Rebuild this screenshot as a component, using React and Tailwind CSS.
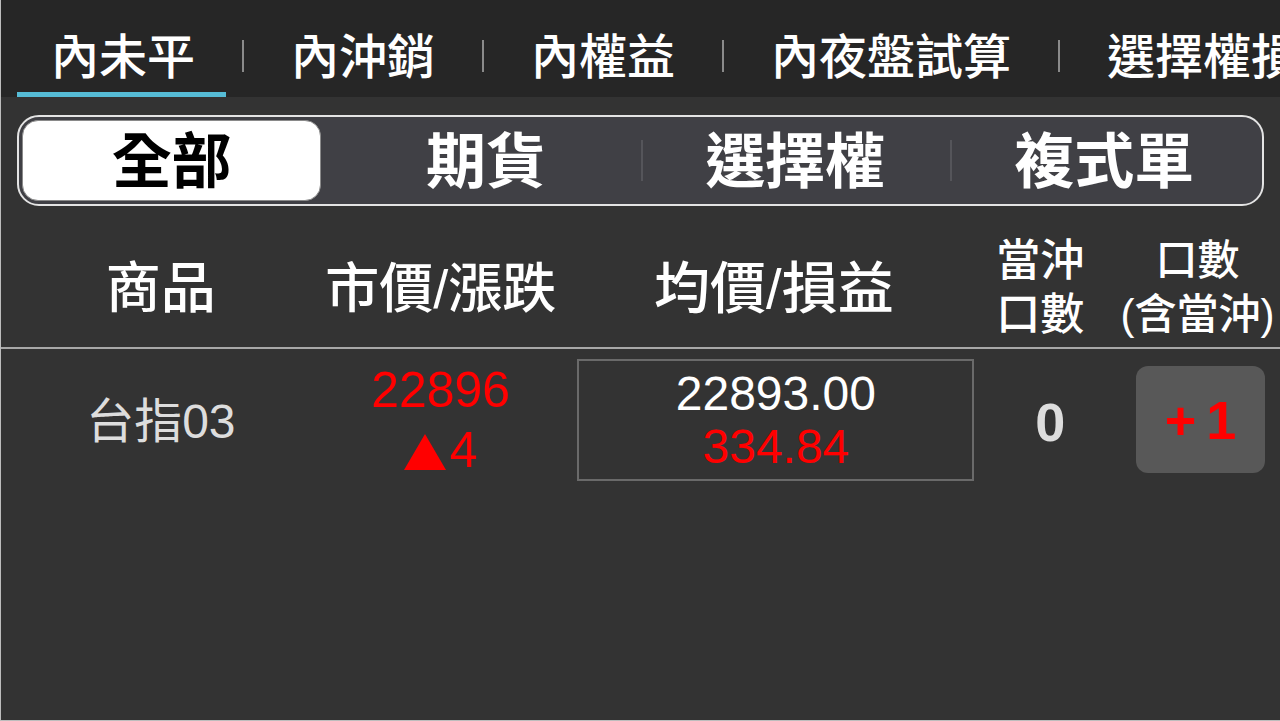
import React from 'react';

const CJK = { fontFamily: '"Liberation Sans", "Noto Sans CJK TC", sans-serif' };

const tabs = ['內未平', '內沖銷', '內權益', '內夜盤試算', '選擇權損益'];
const segments = ['全部', '期貨', '選擇權', '複式單'];

function TopTabs() {
  return (
    <div className="flex h-[97px] items-stretch bg-[#262626] pl-4 overflow-hidden whitespace-nowrap">
      {tabs.map((t, i) => (
        <React.Fragment key={t}>
          {i > 0 && (
            <div className="mx-[13px] flex items-center pt-[14px]">
              <div className="h-[32px] w-[2px] bg-[#8a8a8a]" />
            </div>
          )}
          <div className="relative flex shrink-0 items-center px-[34px] pt-[18px] text-[48px] font-medium leading-none text-white">
            {t}
            {i === 0 && <div className="absolute bottom-0 left-0 right-[3px] h-[5px] bg-[#56bcd6]" />}
          </div>
        </React.Fragment>
      ))}
    </div>
  );
}

function Segments() {
  return (
    <div className="mx-4 mt-[18px] h-[91px] rounded-[22px] border-2 border-[#e4e4e4] bg-[#404045] p-[3px]">
      <div className="grid h-full grid-cols-4">
        {segments.map((s, i) => (
          <div key={s} className="relative flex items-center justify-center">
            {i === 0 ? (
              <div className="mr-[10px] flex h-full w-full items-center justify-center rounded-[16px] border border-[#8a8a8a] bg-white pt-[5px] text-[60px] font-bold leading-none text-black">
                {s}
              </div>
            ) : (
              <div className="pt-[5px] text-[60px] font-bold leading-none text-white">{s}</div>
            )}
            {i > 1 && <div className="absolute left-0 top-[20px] bottom-[20px] w-[2px] bg-[#55555a]" />}
          </div>
        ))}
      </div>
    </div>
  );
}

function HeaderRow() {
  return (
    <div className="flex h-[143px] items-center border-b-2 border-[#a8a8a8] text-white font-medium">
      <div className="flex w-[320px] justify-center pt-[24px] text-[55px] leading-none">商品</div>
      <div className="flex w-[240px] justify-center pt-[24px] text-[54px] leading-none whitespace-nowrap">市價/漲跌</div>
      <div className="flex w-[425px] justify-center pt-[24px] pl-[2px] text-[56px] leading-none whitespace-nowrap">均價/損益</div>
      <div className="flex w-[130px] flex-col items-center pt-[22px] pr-[20px] text-[44px] leading-[54px]">
        <span>當沖</span>
        <span>口數</span>
      </div>
      <div className="flex w-[165px] flex-col items-center pt-[22px] text-[42px] leading-[54px] whitespace-nowrap">
        <span>口數</span>
        <span>(含當沖)</span>
      </div>
    </div>
  );
}

function DataRow() {
  return (
    <div className="flex h-[141px] items-center">
      <div className="flex w-[320px] justify-center pt-[4px] text-[48px] leading-none text-[#dddddd]">台指03</div>
      <div className="flex w-[240px] flex-col items-center text-[50px] leading-[60px] text-[#ff0000]">
        <span>22896</span>
        <span className="flex items-center">
          <svg width="42" height="36" viewBox="0 0 42 36" className="mr-[4px] mt-[4px]">
            <polygon points="21,0 42,36 0,36" fill="#ff0000" />
          </svg>
          4
        </span>
      </div>
      <div className="flex w-[425px] justify-center pl-[6px]">
        <div className="flex h-[122px] w-[397px] flex-col items-center justify-center border-2 border-[#6a6a6a] text-[48px] leading-[53px]">
          <span className="text-white">22893.00</span>
          <span className="text-[#ff0000]">334.84</span>
        </div>
      </div>
      <div className="flex w-[130px] justify-center pt-[4px] text-[54px] font-bold leading-none text-[#dddddd]">0</div>
      <div className="flex w-[165px] justify-center pl-[6px]">
        <div className="flex h-[107px] w-[129px] items-center justify-center rounded-[12px] bg-[#585858] text-[54px] font-bold leading-none text-[#ff0000]">
          +<span className="ml-[10px]">1</span>
        </div>
      </div>
    </div>
  );
}

export default function App() {
  return (
    <div className="h-[721px] w-[1280px] overflow-hidden border-b border-l border-[#bdbdbd] bg-[#333333]" style={CJK}>
      <TopTabs />
      <Segments />
      <HeaderRow />
      <DataRow />
    </div>
  );
}
